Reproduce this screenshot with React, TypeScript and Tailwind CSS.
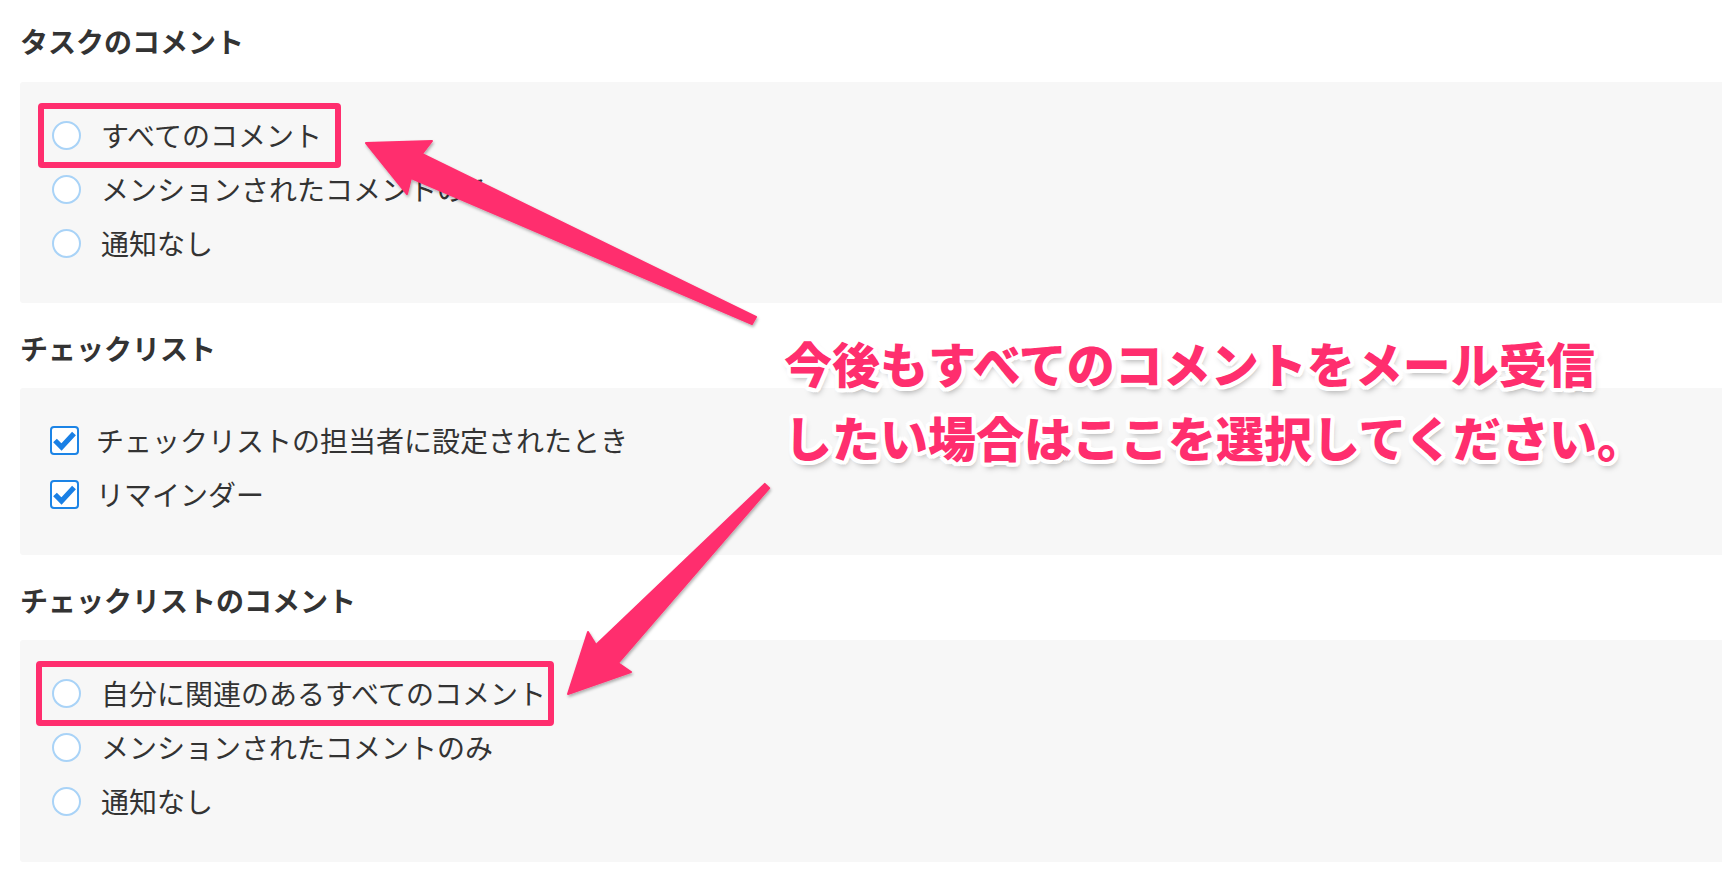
import React from "react";

const PINK = "#ff2e6e";

function Radio({ label }: { label: string }) {
  return (
    <div className="flex h-[54px] items-center gap-[20px] pl-[32px]">
      <span className="box-border h-[29px] w-[29px] shrink-0 rounded-full border-2 border-[#a9d3f7] bg-white" />
      <span className="text-[28px] leading-none text-[#333333]">{label}</span>
    </div>
  );
}

function Check({ label }: { label: string }) {
  return (
    <div className="flex h-[54px] items-center gap-[17px] pl-[30px]">
      <span className="box-border flex h-[29px] w-[29px] shrink-0 items-center justify-center rounded-[4px] border-2 border-[#1c84e6] bg-white">
        <svg width="25" height="25" viewBox="0 0 25 25">
          <path d="M3 12.5 L9.5 19 L22 5.5" fill="none" stroke="#1a80e5" strokeWidth="5.2" strokeLinejoin="miter" strokeLinecap="butt" />
        </svg>
      </span>
      <span className="text-[28px] leading-none text-[#333333]">{label}</span>
    </div>
  );
}

function Heading({ children, first }: { children: React.ReactNode; first?: boolean }) {
  return (
    <h2
      className={`${first ? "mt-[20px]" : "mt-[25px]"} h-[40px] pl-[20px] text-[28px] font-bold leading-[40px] text-[#333333]`}
    >
      {children}
    </h2>
  );
}

export default function App() {
  return (
    <div
      className="relative h-[884px] w-[1722px] overflow-hidden bg-white"
      style={{ fontFamily: '"Noto Sans CJK JP", "Noto Sans", sans-serif' }}
    >
      <div className="flex flex-col pt-px">
        <Heading first>タスクのコメント</Heading>
        <div className="ml-[20px] mt-[21px] h-[221px] rounded-l-[3px] bg-[#f7f7f7] pt-[26px]">
          <Radio label="すべてのコメント" />
          <Radio label="メンションされたコメントのみ" />
          <Radio label="通知なし" />
        </div>

        <Heading>チェックリスト</Heading>
        <div className="ml-[20px] mt-[20px] h-[167px] rounded-l-[3px] bg-[#f7f7f7] pt-[25px]">
          <Check label="チェックリストの担当者に設定されたとき" />
          <Check label="リマインダー" />
        </div>

        <Heading>チェックリストのコメント</Heading>
        <div className="ml-[20px] mt-[20px] h-[222px] rounded-l-[3px] bg-[#f7f7f7] pt-[26px]">
          <Radio label="自分に関連のあるすべてのコメント" />
          <Radio label="メンションされたコメントのみ" />
          <Radio label="通知なし" />
        </div>
      </div>

      {/* annotation boxes */}
      <div className="pointer-events-none absolute left-[38px] top-[103px] h-[65px] w-[303px] rounded-[4px] border-[6px] border-[#ff2e6e]" />
      <div className="pointer-events-none absolute left-[36px] top-[661px] h-[65px] w-[518px] rounded-[4px] border-[6px] border-[#ff2e6e]" />

      {/* arrows */}
      <svg className="pointer-events-none absolute left-0 top-0" width="1722" height="884" viewBox="0 0 1722 884">
        <defs>
          <filter id="sh" x="-20%" y="-20%" width="140%" height="140%">
            <feDropShadow dx="1" dy="2" stdDeviation="1.5" floodColor="#000" floodOpacity="0.3" />
          </filter>
        </defs>
        <polygon
          points="366,143 432,141 422,154 756,317 752,324 411,178 407,194"
          fill={PINK}
          stroke={PINK}
          strokeWidth="2"
          strokeLinejoin="round"
          filter="url(#sh)"
        />
        <polygon
          points="568,694 588,632 596,645 764.8,483.9 769.2,488.1 618,663 631,672"
          fill={PINK}
          stroke={PINK}
          strokeWidth="2"
          strokeLinejoin="round"
          filter="url(#sh)"
        />
      </svg>

      {/* annotation text */}
      <div className="pointer-events-none absolute left-[784px] top-[325px] whitespace-nowrap text-[48px] font-black leading-[74px] text-[#ff2e6e] [text-shadow:4px_0_0_#fff,-4px_0_0_#fff,0_4px_0_#fff,0_-4px_0_#fff,3px_3px_0_#fff,-3px_3px_0_#fff,3px_-3px_0_#fff,-3px_-3px_0_#fff,2px_4px_0_#fff,-2px_4px_0_#fff,4px_2px_0_#fff,-4px_2px_0_#fff,2px_-4px_0_#fff,-2px_-4px_0_#fff,4px_-2px_0_#fff,-4px_-2px_0_#fff,2px_5px_6px_rgba(0,0,0,0.35)]">
        <div>今後もすべてのコメントをメール受信</div>
        <div>したい場合はここを選択してください。</div>
      </div>
    </div>
  );
}
